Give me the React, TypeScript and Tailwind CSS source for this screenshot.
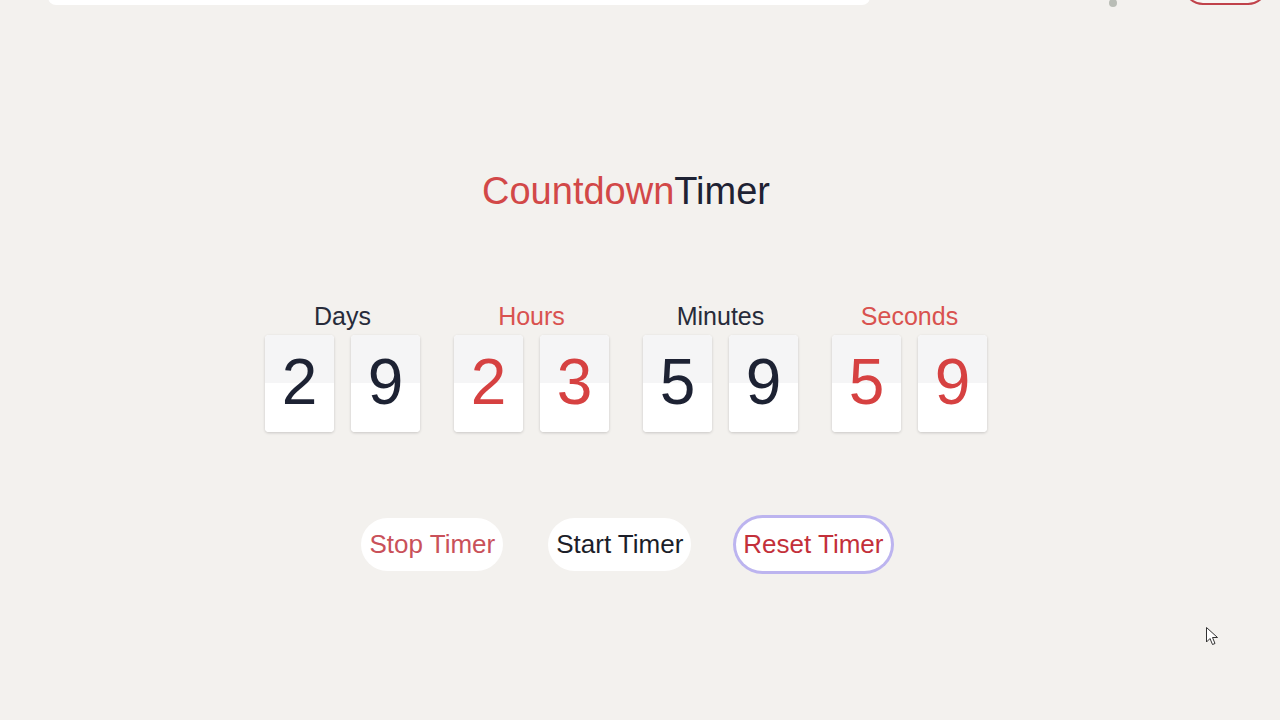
import { useState } from "react";

type Unit = {
  label: string;
  value: string;
  red: boolean;
};

const units: Unit[] = [
  { label: "Days", value: "29", red: false },
  { label: "Hours", value: "23", red: true },
  { label: "Minutes", value: "59", red: false },
  { label: "Seconds", value: "59", red: true },
];

function DigitCard({ digit, red }: { digit: string; red: boolean }) {
  return (
    <div className="relative flex h-[97px] w-[69px] flex-col overflow-hidden rounded-[4px] bg-white shadow-[0_1px_3px_rgba(0,0,0,0.18)]">
      <div className="h-[48px] bg-[#f5f5f6]" />
      <div className="flex-1 bg-white" />
      <span
        className={`absolute inset-0 -top-[3px] flex items-center justify-center text-[64px] leading-none ${
          red ? "text-[#d64141]" : "text-[#1d2233]"
        }`}
      >
        {digit}
      </span>
    </div>
  );
}

export default function App() {
  const [running, setRunning] = useState(false);

  return (
    <div
      className="relative min-h-[720px] overflow-hidden bg-[#f3f1ee]"
      style={{ fontFamily: '"Liberation Sans", Arial, sans-serif' }}
    >
      {/* header, mostly scrolled out of view */}
      <header className="-mt-[35px] flex h-[40px] items-center pl-[48px] pr-[12px]">
        <div className="h-[40px] w-[822px] rounded-lg bg-white" />
        <div className="ml-auto mr-[66px] mb-[-2px] h-[8px] w-[8px] self-end rounded-full bg-[#b9bdb6]" />
        <div className="h-[40px] w-[85px] rounded-full border-2 border-[#c0424a] bg-[#f7f5f3]" />
      </header>

      <main className="flex flex-col items-center pr-[28px]">
        <h1 className="mt-[163px] text-[38px] leading-[46px]">
          <span className="text-[#d24848]">Countdown</span>
          <span className="text-[#1e2233]">Timer</span>
        </h1>

        <div className="mt-[87px] flex gap-[34px]">
          {units.map((u) => (
            <div key={u.label} className="flex flex-col items-center">
              <span
                className={`mb-[4px] text-[25px] leading-[30px] ${
                  u.red ? "text-[#d9524f]" : "text-[#272b3a]"
                }`}
              >
                {u.label}
              </span>
              <div className="flex gap-[17px]">
                {u.value.split("").map((d, i) => (
                  <DigitCard key={i} digit={d} red={u.red} />
                ))}
              </div>
            </div>
          ))}
        </div>

        <div className="mt-[86px] flex items-center gap-[45px]">
          <button
            onClick={() => setRunning(false)}
            className="h-[53px] rounded-full bg-white px-[8px] text-[26px] text-[#c9515a]"
          >
            Stop Timer
          </button>
          <button
            onClick={() => setRunning(true)}
            className="h-[53px] rounded-full bg-white px-[8px] text-[26px] text-[#1c1e29]"
          >
            Start Timer
          </button>
          <button
            onClick={() => setRunning(false)}
            className={`h-[53px] rounded-full bg-white px-[7px] text-[26px] text-[#c3303a] ring-[3px] ring-[#bcb4ef] ${
              running ? "" : ""
            }`}
          >
            Reset Timer
          </button>
        </div>
      </main>

      {/* mouse pointer */}
      <svg
        className="absolute left-[1205px] top-[626px]"
        width="16"
        height="22"
        viewBox="0 0 16 22"
      >
        <path
          d="M1.5 1.5 L1.5 16 L5 12.5 L7.5 18.5 L10 17.5 L7.5 11.5 L12.5 11.5 Z"
          fill="white"
          stroke="#333"
          strokeWidth="1"
          strokeLinejoin="round"
        />
      </svg>
    </div>
  );
}
